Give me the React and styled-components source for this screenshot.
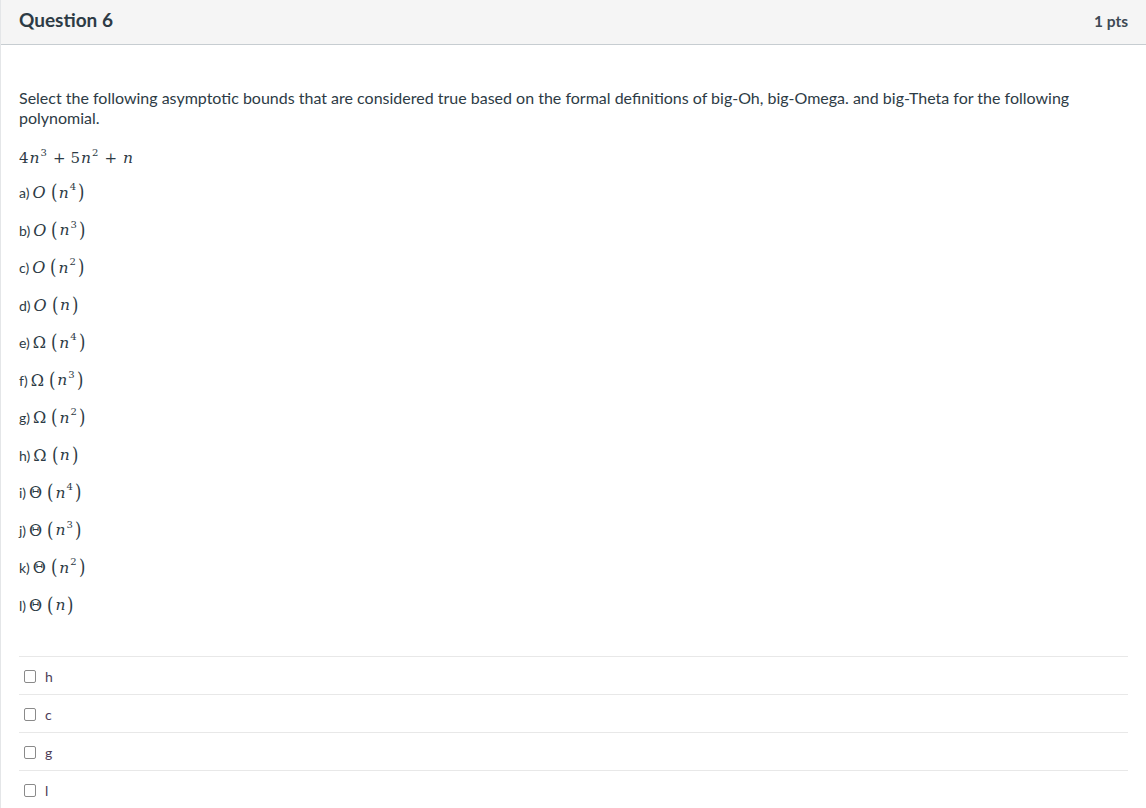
import React from "react";
import styled, { createGlobalStyle } from "styled-components";

const MATH = `"DejaVu Serif", "Liberation Serif", serif`;

const Global = createGlobalStyle`
  html, body { margin: 0; padding: 0; background: #ffffff; }
  body { font-family: Lato, "Open Sans", sans-serif; color: #2d3b45; }
`;

const Card = styled.div`
  width: 1146px;
  min-height: 808px;
  box-sizing: border-box;
  border-left: 1px solid #e4e6e8;
  background: #fff;
`;

const Header = styled.div`
  height: 45px;
  box-sizing: border-box;
  background: #f5f5f5;
  border-bottom: 1px solid #c7cdd1;
  display: flex;
  align-items: center;
  justify-content: space-between;
  padding: 0 18px 5px 18px;
`;

const Title = styled.h2`
  margin: 0;
  font-family: Lato, sans-serif;
  font-weight: 700;
  font-size: 19px;
  color: #2d3b45;
`;

const Points = styled.div`
  font-family: Lato, sans-serif;
  font-weight: 700;
  font-size: 15.5px;
  color: #3d4a54;
  padding-top: 2px;
`;

const Body = styled.div`
  padding: 43px 18px 0 18px;
`;

const Text = styled.p`
  margin: 0;
  font-family: Lato, sans-serif;
  font-size: 16px;
  line-height: 20px;
  color: #2d3b45;
  max-width: 1100px;
`;

const Formula = styled.p`
  margin: 20px 0 0 0;
  height: 20px;
  display: flex;
  align-items: center;
  font-family: ${MATH};
  font-size: 15px;
  color: #2d3b45;
`;

const OptionList = styled.div`
  display: flex;
  flex-direction: column;
  margin-top: 6px;
`;

const Option = styled.p`
  margin: 0;
  height: 37.5px;
  display: flex;
  align-items: center;
  font-family: ${MATH};
  font-size: 15px;
  color: #2d3b45;
`;

const Label = styled.span`
  font-family: Lato, sans-serif;
  font-size: 14px;
  margin-right: 3px;
  color: #2d3b45;
`;

const Op = styled.span`
  font-family: ${MATH};
  font-style: ${(p) => (p.$italic ? "italic" : "normal")};
  font-size: 16px;
  margin-right: 4px;
`;

const Paren = styled.span`
  font-family: ${MATH};
  font-weight: 300;
  font-size: 21px;
  line-height: 1;
  transform: scaleX(0.78);
  display: inline-block;
`;

const Var = styled.span`
  font-family: ${MATH};
  font-style: italic;
  font-size: 15.5px;
  margin: 0 1px;
`;

const Sup = styled.span`
  font-family: ${MATH};
  font-size: 10px;
  position: relative;
  top: -6px;
  margin-right: 1px;
`;

const Plus = styled.span`
  margin: 0 5px;
  font-size: 15px;
`;

const Num = styled.span`
  font-size: 15px;
`;

const Answers = styled.div`
  margin-top: 32px;
`;

const Answer = styled.label`
  display: flex;
  align-items: center;
  height: 38px;
  box-sizing: border-box;
  border-top: 1.5px solid #e8e8e8;
  padding-left: 5px;
  padding-top: 1px;
  gap: 9px;
  font-family: Lato, sans-serif;
  font-size: 14px;
  color: #4d3d58;
`;

const Box = styled.span`
  width: 10px;
  height: 11px;
  border: 1.5px solid #8a8a8a;
  border-radius: 2px;
  display: inline-block;
`;

const options = [
  ["a)", "O", true, "4"],
  ["b)", "O", true, "3"],
  ["c)", "O", true, "2"],
  ["d)", "O", true, null],
  ["e)", "Ω", false, "4"],
  ["f)", "Ω", false, "3"],
  ["g)", "Ω", false, "2"],
  ["h)", "Ω", false, null],
  ["i)", "Θ", false, "4"],
  ["j)", "Θ", false, "3"],
  ["k)", "Θ", false, "2"],
  ["l)", "Θ", false, null],
];

const answers = ["h", "c", "g", "l"];

export default function App() {
  return (
    <>
      <Global />
      <Card>
        <Header>
          <Title>Question 6</Title>
          <Points>1 pts</Points>
        </Header>
        <Body>
          <Text>
            Select the following asymptotic bounds that are considered true based on the formal
            definitions of big-Oh, big-Omega. and big-Theta for the following polynomial.
          </Text>
          <Formula>
            <Num>4</Num>
            <Var>n</Var>
            <Sup>3</Sup>
            <Plus>+</Plus>
            <Num>5</Num>
            <Var>n</Var>
            <Sup>2</Sup>
            <Plus>+</Plus>
            <Var>n</Var>
          </Formula>
          <OptionList>
            {options.map(([label, op, italic, exp]) => (
              <Option key={label}>
                <Label>{label}</Label>
                <Op $italic={italic}>{op}</Op>
                <Paren>(</Paren>
                <Var>n</Var>
                {exp && <Sup>{exp}</Sup>}
                <Paren>)</Paren>
              </Option>
            ))}
          </OptionList>
          <Answers>
            {answers.map((a) => (
              <Answer key={a}>
                <Box />
                {a}
              </Answer>
            ))}
          </Answers>
        </Body>
      </Card>
    </>
  );
}
